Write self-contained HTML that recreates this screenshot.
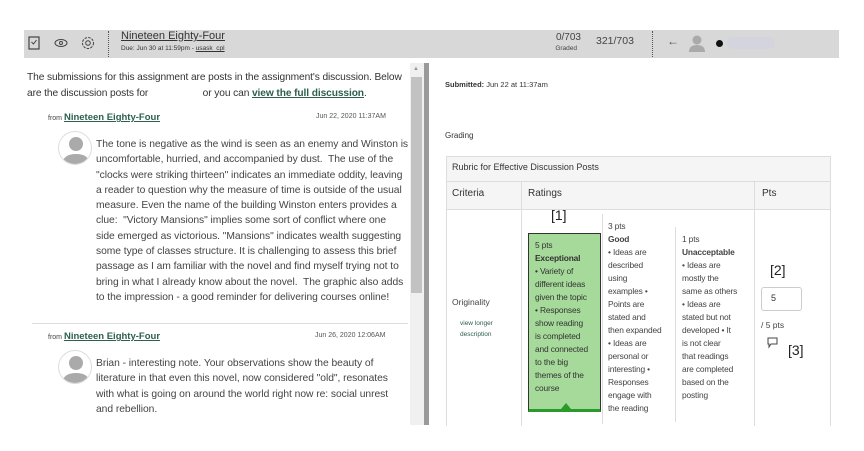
<!DOCTYPE html>
<html><head><meta charset="utf-8"><style>
*{margin:0;padding:0;box-sizing:border-box}
body{width:864px;height:451px;background:#fff;font-family:"Liberation Sans",sans-serif;color:#333;position:relative;overflow:hidden}
.a{position:absolute}
a,.lk{color:#2d5f4e;text-decoration:underline}
.post{font-size:10.3px;line-height:15.3px;color:#444;white-space:nowrap;letter-spacing:-0.05px}
.av{width:34px;height:34px;border-radius:50%;border:1px solid #ddd;background:#fff;overflow:hidden}
.sm{font-size:8.4px;color:#444;letter-spacing:-0.15px;white-space:nowrap;line-height:13px}
</style></head><body>
<div class="a" style="left:24px;top:30px;width:815px;height:28px;background:#d8d8d8"></div>
<svg class="a" style="left:28px;top:35px" width="80" height="18">
<rect x="1" y="2" width="10" height="12" fill="none" stroke="#444" stroke-width="1.2"/><path d="M3.5 7l2 2 3-4" stroke="#444" fill="none"/>
<ellipse cx="33" cy="8" rx="6" ry="3.5" fill="none" stroke="#444"/><circle cx="33" cy="8" r="1.5" fill="none" stroke="#444"/>
<circle cx="60" cy="8" r="5.5" fill="none" stroke="#444" stroke-dasharray="2.5 1.2"/><circle cx="60" cy="8" r="2.3" fill="none" stroke="#444"/>
</svg>
<div class="a" style="left:108px;top:31px;height:26px;border-left:1px dotted #555"></div>
<div class="a lk" style="left:121px;top:30px;font-size:11px;color:#333">Nineteen Eighty-Four</div>
<div class="a" style="left:121px;top:45px;font-size:6.5px;color:#333">Due: Jun 30 at 11:59pm - <u>usask_cpl</u></div>
<div class="a" style="left:548px;top:32px;font-size:10px;color:#444;text-align:right;width:33px">0/703</div>
<div class="a" style="left:548px;top:45px;font-size:6.5px;color:#444;text-align:right;width:29px">Graded</div>
<div class="a" style="left:596px;top:35px;font-size:10.5px;color:#444">321/703</div>
<div class="a" style="left:652px;top:31px;height:26px;border-left:1px dotted #555"></div>
<div class="a" style="left:667px;top:34px;font-size:12px;color:#555">←</div>
<svg class="a" style="left:688px;top:34px" width="20" height="20"><circle cx="9" cy="6" r="4.5" fill="#aaa"/><path d="M1 18q0-7 8-7t8 7z" fill="#aaa"/></svg>
<div class="a" style="left:716px;top:40px;width:7px;height:7px;border-radius:50%;background:#111"></div>
<div class="a" style="left:727px;top:37px;width:48px;height:12px;border-radius:5px;background:#d4d4de"></div>

<div class="a" style="left:27px;top:70px;font-size:10.2px;line-height:16px;color:#333;letter-spacing:-0.1px;white-space:nowrap">The submissions for this assignment are posts in the assignment's discussion. Below<br>are the discussion posts for <span style="display:inline-block;width:49px"></span> or you can <a style="font-weight:bold">view the full discussion</a>.</div>
<div class="a" style="left:48px;top:112px;font-size:7px;color:#444">from <a style="font-size:9.5px;font-weight:bold">Nineteen Eighty-Four</a></div>
<div class="a" style="left:316px;top:113px;font-size:7px;color:#555">Jun 22, 2020 11:37AM</div>
<div class="a av" style="left:58px;top:131px"><svg width="34" height="34"><circle cx="17" cy="12" r="7" fill="#aaa"/><path d="M3 34q0-12 14-12t14 12z" fill="#aaa"/></svg></div>
<div class="a post" style="left:96px;top:137px">The tone is negative as the wind is seen as an enemy and Winston is<br>uncomfortable, hurried, and accompanied by dust.&nbsp; The use of the<br>"clocks were striking thirteen" indicates an immediate oddity, leaving<br>a reader to question why the measure of time is outside of the usual<br>measure. Even the name of the building Winston enters provides a<br>clue:&nbsp; "Victory Mansions" implies some sort of conflict where one<br>side emerged as victorious. "Mansions" indicates wealth suggesting<br>some type of classes structure. It is challenging to assess this brief<br>passage as I am familiar with the novel and find myself trying not to<br>bring in what I already know about the novel.&nbsp; The graphic also adds<br>to the impression - a good reminder for delivering courses online!</div>
<div class="a" style="left:32px;top:323px;width:376px;border-top:1px solid #ddd"></div>
<div class="a" style="left:48px;top:331px;font-size:7px;color:#444">from <a style="font-size:9.5px;font-weight:bold">Nineteen Eighty-Four</a></div>
<div class="a" style="left:315px;top:332px;font-size:7px;color:#555">Jun 26, 2020 12:06AM</div>
<div class="a av" style="left:58px;top:350px"><svg width="34" height="34"><circle cx="17" cy="12" r="7" fill="#aaa"/><path d="M3 34q0-12 14-12t14 12z" fill="#aaa"/></svg></div>
<div class="a post" style="left:96px;top:356px">Brian - interesting note. Your observations show the beauty of<br>literature in that even this novel, now considered "old", resonates<br>with what is going on around the world right now re: social unrest<br>and rebellion.</div>

<div class="a" style="left:410px;top:63px;width:14px;height:362px;background:#f0f0f0"></div>
<div class="a" style="left:413px;top:66px;font-size:6px;color:#999">▲</div>
<div class="a" style="left:411px;top:77px;width:11px;height:216px;background:#c2c2c2"></div>
<div class="a" style="left:424px;top:63px;width:5px;height:362px;background:#9a9a9a"></div>

<div class="a" style="left:445px;top:80px;font-size:7.5px;color:#333"><b>Submitted:</b> Jun 22 at 11:37am</div>
<div class="a" style="left:445px;top:131px;font-size:8px;color:#333">Grading</div>
<div class="a" style="left:446px;top:156px;width:385px;height:270px;border:1px solid #ddd;border-bottom:none"></div>
<div class="a" style="left:447px;top:157px;width:383px;height:25px;background:#f5f5f5;border-bottom:1px solid #ddd"></div>
<div class="a" style="left:452px;top:162px;font-size:9px;color:#333">Rubric for Effective Discussion Posts</div>
<div class="a" style="left:447px;top:182px;width:383px;height:28px;background:#f5f5f5;border-bottom:1px solid #ddd"></div>
<div class="a" style="left:521px;top:182px;height:244px;border-left:1px solid #ddd"></div>
<div class="a" style="left:754px;top:182px;height:244px;border-left:1px solid #ddd"></div>
<div class="a" style="left:452px;top:188px;font-size:10px;color:#333">Criteria</div>
<div class="a" style="left:528px;top:188px;font-size:10px;color:#333">Ratings</div>
<div class="a" style="left:762px;top:188px;font-size:10px;color:#333">Pts</div>
<div class="a" style="left:452px;top:297px;font-size:8.5px;color:#444">Originality</div>
<div class="a" style="left:460px;top:318px;font-size:6.5px;line-height:11px;color:#2d5f4e">view longer<br>description</div>
<div class="a" style="left:551px;top:207px;font-size:14px;color:#222">[1]</div>
<div class="a" style="left:528px;top:233px;width:73px;height:179px;background:#a6da9b;border:1.5px solid #333;border-bottom:3px solid #2a9a2a"></div>
<div class="a" style="left:561px;top:403px;width:0;height:0;border-left:5px solid transparent;border-right:5px solid transparent;border-bottom:6px solid #2a9a2a"></div>
<div class="a sm" style="left:535px;top:239px;color:#333">5 pts<br><b style="font-weight:600">Exceptional</b><br>• Variety of<br>different ideas<br>given the topic<br>• Responses<br>show reading<br>is completed<br>and connected<br>to the big<br>themes of the<br>course</div>
<div class="a" style="left:602px;top:214px;height:210px;border-left:1px solid #ddd"></div>
<div class="a sm" style="left:608px;top:220px">3 pts<br><b style="font-weight:600">Good</b><br>• Ideas are<br>described<br>using<br>examples •<br>Points are<br>stated and<br>then expanded<br>• Ideas are<br>personal or<br>interesting •<br>Responses<br>engage with<br>the reading</div>
<div class="a" style="left:675px;top:227px;height:195px;border-left:1px solid #ddd"></div>
<div class="a sm" style="left:682px;top:233px">1 pts<br><b style="font-weight:600">Unacceptable</b><br>• Ideas are<br>mostly the<br>same as others<br>• Ideas are<br>stated but not<br>developed • It<br>is not clear<br>that readings<br>are completed<br>based on the<br>posting</div>
<div class="a" style="left:770px;top:262px;font-size:14px;color:#222">[2]</div>
<div class="a" style="left:761px;top:287px;width:41px;height:24px;border:1px solid #ccc;border-radius:3px;font-size:9px;padding:5px 0 0 9px;color:#333">5</div>
<div class="a" style="left:761px;top:320px;font-size:8.5px;color:#444">/ 5 pts</div>
<svg class="a" style="left:767px;top:337px" width="12" height="12"><path d="M1 1h9v6h-6l-2 3v-3h-1z" fill="none" stroke="#444"/></svg>
<div class="a" style="left:788px;top:342px;font-size:14px;color:#222">[3]</div>
</body></html>
